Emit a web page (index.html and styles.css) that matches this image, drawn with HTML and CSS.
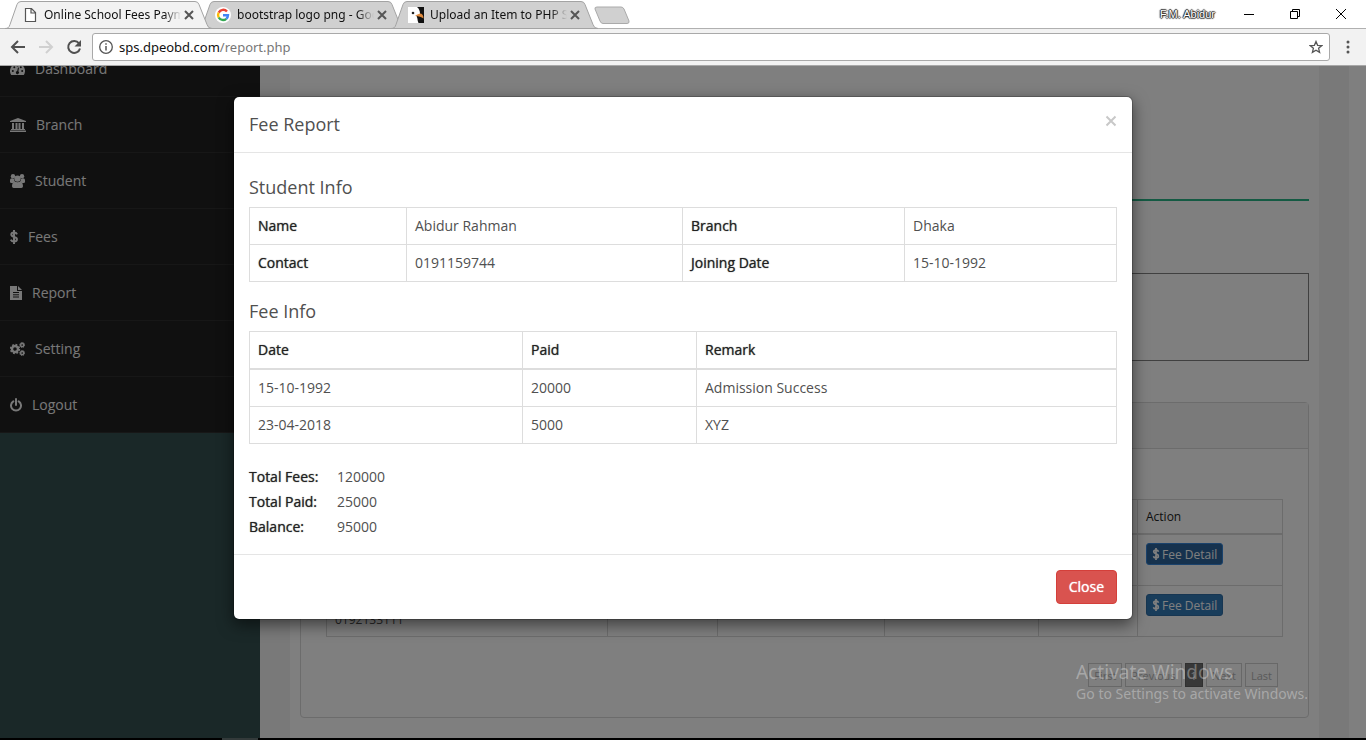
FILE: index.html
```html
<!DOCTYPE html>
<html lang="en">
<head>
<meta charset="utf-8">
<meta name="viewport" content="width=device-width, initial-scale=1">
<title>Online School Fees Payment</title>
<link rel="stylesheet" href="styles.css">
</head>
<body>
<svg class="defs" aria-hidden="true">
  <symbol id="tab-shape" viewBox="0 0 207 28">
    <path d="M0 28C3 28 4 27 5 24L12 4Q13 1 16 1H190Q193 1 194 4L202 24Q203 28 207 28Z"/>
  </symbol>
  <symbol id="cross" viewBox="0 0 16 16"><path d="M4 4l8 8M12 4l-8 8" fill="none" stroke="currentColor" stroke-width="2"/></symbol>
  <symbol id="dollar" viewBox="0 0 8 14"><path d="M4 0v14M7 4.300C6.500 3 5.500 2.500 4 2.500C2.400 2.500 1.300 3.200 1.300 4.500C1.300 7.400 6.900 6.200 6.900 9.300C6.900 10.700 5.700 11.500 4 11.500C2.400 11.500 1.300 10.900 .8 9.600" fill="none" stroke="currentColor" stroke-width="2"/></symbol>
</svg>

<header class="browser">
  <div class="tabstrip">
    <div class="tab tab-active">
      <svg class="tab-bg" preserveAspectRatio="none"><use href="#tab-shape"/></svg>
      <div class="tab-content">
        <svg class="favicon" viewBox="0 0 16 16"><path d="M3.500 1.500h6l4 4v9h-10zM9 1.500V6h4.500" fill="#fff" stroke="#555" stroke-width="1.200"/></svg>
        <span class="tab-title">Online School Fees Payment</span>
        <button class="tab-close" aria-label="Close tab"><svg viewBox="0 0 16 16"><use href="#cross"/></svg></button>
      </div>
    </div>
    <div class="tab">
      <svg class="tab-bg" preserveAspectRatio="none"><use href="#tab-shape"/></svg>
      <div class="tab-content">
        <svg class="favicon" viewBox="0 0 16 16"><circle cx="8" cy="8" r="8" fill="#fff"/><g fill="none" stroke-width="2.400"><path d="M12 4.600A5 5 0 0 0 3.700 5.600" stroke="#ea4335"/><path d="M3.700 5.600A5 5 0 0 0 3.700 10.500" stroke="#fbbc05"/><path d="M3.700 10.500A5 5 0 0 0 11.300 11.800" stroke="#34a853"/><path d="M11.300 11.800A5 5 0 0 0 13 8.200H8" stroke="#4285f4"/></g></svg>
        <span class="tab-title">bootstrap logo png - Google Search</span>
        <button class="tab-close" aria-label="Close tab"><svg viewBox="0 0 16 16"><use href="#cross"/></svg></button>
      </div>
    </div>
    <div class="tab">
      <svg class="tab-bg" preserveAspectRatio="none"><use href="#tab-shape"/></svg>
      <div class="tab-content">
        <svg class="favicon" viewBox="0 0 16 16"><path d="M0 0h16v16H0z" fill="#fff"/><path d="M9 0h7v16H10.500C9 13 10 11 8.500 9.500L12 7C12 4 11 1.500 9 0z" fill="#111"/><path d="M7 8.500L12 6.500C14 6.500 15.500 8 15.500 11.500C13.500 9.500 11 10 7 8.500z" fill="#e08a3c"/><circle cx="5" cy="6" r="1.300" fill="#222"/></svg>
        <span class="tab-title">Upload an Item to PHP Server</span>
        <button class="tab-close" aria-label="Close tab"><svg viewBox="0 0 16 16"><use href="#cross"/></svg></button>
      </div>
    </div>
    <button class="new-tab" aria-label="New tab"><svg viewBox="0 0 36 20"><path d="M3 1H27Q29 1 30 3L35 15Q35.500 17.500 33 17.500H9Q7 17.500 6 15L1 3Q.5 1 3 1z" fill="#d0d0d0" stroke="#aaa"/></svg></button>
    <span class="profile">F.M. Abidur</span>
    <button class="win-btn" aria-label="Minimize"><svg viewBox="0 0 12 12"><path d="M1 6.500h10" stroke="#000" fill="none"/></svg></button>
    <button class="win-btn" aria-label="Restore"><svg viewBox="0 0 12 12"><path d="M1.500 3.500h7v7h-7zM3.500 3.500v-2h7v7h-2" stroke="#000" fill="none"/></svg></button>
    <button class="win-btn" aria-label="Close window"><svg viewBox="0 0 12 12"><path d="M1 1l10 10M11 1L1 11" stroke="#000" fill="none"/></svg></button>
  </div>
  <div class="toolbar">
    <button class="nav-btn" aria-label="Back"><svg viewBox="0 0 16 16"><path d="M15 8H2M8 2L2 8l6 6" fill="none" stroke="#505050" stroke-width="2"/></svg></button>
    <button class="nav-btn" aria-label="Forward"><svg viewBox="0 0 16 16"><path d="M1 8h13M8 2l6 6-6 6" fill="none" stroke="#d0d0d0" stroke-width="2"/></svg></button>
    <button class="nav-btn" aria-label="Reload"><svg viewBox="0 0 16 16"><path d="M13 4.300A6 6 0 1 0 14 9.500" fill="none" stroke="#505050" stroke-width="2"/><path d="M15 1v6.500H8.500z" fill="#505050"/></svg></button>
    <div class="omnibox">
      <svg class="info" viewBox="0 0 14 14"><circle cx="7" cy="7" r="6.300" fill="none" stroke="#555" stroke-width="1.300"/><path d="M7 6v4.500M7 3.300v1.500" stroke="#555" stroke-width="1.500"/></svg>
      <div class="url" role="textbox" aria-label="Address">sps.dpeobd.com<span class="url-path">/report.php</span></div>
      <button class="star" aria-label="Bookmark this page"><svg viewBox="0 0 14 14"><path d="M7 1.500l1.600 3.800 4.200.3-3.200 2.700 1 4.100L7 10.200l-3.600 2.200 1-4.100L1.200 5.600l4.200-.3z" fill="none" stroke="#555" stroke-width="1.300"/></svg></button>
    </div>
    <button class="menu" aria-label="Menu"><svg viewBox="0 0 4 14"><g fill="#555"><circle cx="2" cy="2" r="1.500"/><circle cx="2" cy="7" r="1.500"/><circle cx="2" cy="12" r="1.500"/></g></svg></button>
  </div>
</header>

<div class="viewport">
  <div class="page">
    <nav class="sidebar">
      <ul class="menu-list">
        <li><a href="#"><svg class="i15" viewBox="0 0 15 14"><path d="M1.200 13A7.500 7.500 0 1 1 13.800 13z" fill="currentColor"/><g fill="#202020"><circle cx="2.800" cy="9" r="1"/><circle cx="4.300" cy="5.200" r="1"/><circle cx="7.500" cy="3.600" r="1"/><circle cx="12.200" cy="9" r="1"/><circle cx="10.800" cy="5.200" r="1"/><path d="M8 5.500l1 .2-.6 3.600a1.600 1.600 0 1 1-1.200-.3z"/></g></svg>Dashboard</a></li>
        <li><a href="#"><svg class="i16" viewBox="0 0 16 14"><path d="M8 0l8 3v1H0V3zM2 5h2v6h1.500V5h2v6h1V5h2v6H12V5h2v6h1v1H1v-1h1zM0 12.500h16V14H0z" fill="currentColor"/></svg>Branch</a></li>
        <li><a href="#"><svg class="i15" viewBox="0 0 15 14"><g fill="currentColor"><circle cx="3" cy="2.200" r="2.200"/><circle cx="12" cy="2.200" r="2.200"/><path d="M0 8V6.500C0 5 .8 4.200 2 4.200L4 5Q4 6.500 5 7.600L3 9H1.500Q0 9 0 8zM15 8V6.500C15 5 14.200 4.200 13 4.200L11 5Q11 6.500 10 7.600L12 9h1.500Q15 9 15 8z"/><circle cx="7.500" cy="4.600" r="3.200"/><path d="M2 12.300C2 10 2.700 8 4.500 7.500Q7.500 9 10.500 7.500C12.300 8 13 10 13 12.300Q13 14 11.300 14H3.700Q2 14 2 12.300z"/></g></svg>Student</a></li>
        <li><a href="#"><svg class="i8" viewBox="0 0 8 14"><use href="#dollar"/></svg>Fees</a></li>
        <li><a href="#"><svg class="i12" viewBox="0 0 12 14"><path d="M0 0h7v5h5v9H0zM8 0l4 4H8z" fill="currentColor"/><path d="M3 6.500h6M3 8.800h6M3 11h6" stroke="#202020"/></svg>Report</a></li>
        <li><a href="#"><svg class="i15" viewBox="0 0 15 14"><g fill="none" stroke="currentColor"><circle cx="5" cy="7" r="3" stroke-width="2.400"/><circle cx="5" cy="7" r="4.400" stroke-width="1.600" stroke-dasharray="1.800 1.650"/><circle cx="12.200" cy="3" r="1.600" stroke-width="1.500"/><circle cx="12.200" cy="3" r="2.500" stroke-width="1" stroke-dasharray="1.200 .76"/><circle cx="12.200" cy="11" r="1.600" stroke-width="1.500"/><circle cx="12.200" cy="11" r="2.500" stroke-width="1" stroke-dasharray="1.200 .76"/></g></svg>Setting</a></li>
        <li><a href="#"><svg class="i12" viewBox="0 0 12 14"><path d="M3.300 3.400A5 5 0 1 0 8.700 3.400M6 1v6" fill="none" stroke="currentColor" stroke-width="2" stroke-linecap="round"/></svg>Logout</a></li>
      </ul>
    </nav>
    <main class="content">
      <div class="inner">
        <hr class="rule">
        <div class="search-box"></div>
        <section class="panel">
          <div class="panel-head"></div>
          <div class="panel-body">
            <table class="grid report-table">
              <colgroup><col class="w281"><col class="w110"><col class="w167"><col class="w154"><col class="w99"><col></colgroup>
              <thead><tr><th></th><th></th><th></th><th></th><th></th><th>Action</th></tr></thead>
              <tbody>
                <tr><td>Abidur Rahman<br>0191159744</td><td></td><td></td><td></td><td></td><td><button class="detail detail-focus"><svg class="i8" viewBox="0 0 8 14"><use href="#dollar"/></svg>Fee Detail</button></td></tr>
                <tr><td><br>0192133111</td><td></td><td></td><td></td><td></td><td><button class="detail"><svg class="i8" viewBox="0 0 8 14"><use href="#dollar"/></svg>Fee Detail</button></td></tr>
              </tbody>
            </table>
            <div class="pager">
              <button>First</button><button>Previous</button><button class="current">1</button><button>Next</button><button>Last</button>
            </div>
          </div>
        </section>
      </div>
    </main>
  </div>

  <div class="backdrop">
    <div class="modal" role="dialog" aria-labelledby="modal-title">
      <div class="modal-header">
        <h4 id="modal-title">Fee Report</h4>
        <button class="dismiss" aria-label="Dismiss"><svg viewBox="0 0 12 12"><path d="M1.500 1.500l9 9M10.500 1.500l-9 9" fill="none" stroke="#c8c8c8" stroke-width="2"/></svg></button>
      </div>
      <div class="modal-body">
        <h4>Student Info</h4>
        <table class="grid">
          <colgroup><col class="w157"><col class="w276"><col class="w222"><col></colgroup>
          <tbody>
            <tr><th>Name</th><td>Abidur Rahman</td><th>Branch</th><td>Dhaka</td></tr>
            <tr><th>Contact</th><td>0191159744</td><th>Joining Date</th><td>15-10-1992</td></tr>
          </tbody>
        </table>
        <h4>Fee Info</h4>
        <table class="grid">
          <colgroup><col class="w273"><col class="w174"><col></colgroup>
          <thead><tr><th>Date</th><th>Paid</th><th>Remark</th></tr></thead>
          <tbody>
            <tr><td>15-10-1992</td><td>20000</td><td>Admission Success</td></tr>
            <tr><td>23-04-2018</td><td>5000</td><td>XYZ</td></tr>
          </tbody>
        </table>
        <table class="totals">
          <tbody>
            <tr><th>Total Fees:</th><td>120000</td></tr>
            <tr><th>Total Paid:</th><td>25000</td></tr>
            <tr><th>Balance:</th><td>95000</td></tr>
          </tbody>
        </table>
      </div>
      <div class="modal-footer"><button class="close-btn">Close</button></div>
    </div>
  </div>

  <div class="watermark"><p class="wm-title">Activate Windows</p><p class="wm-text">Go to Settings to activate Windows.</p></div>
</div>
<footer class="taskbar"><span class="task"></span></footer>
</body>
</html>
```
FILE: styles.css
```css
* { box-sizing: border-box; }
body {
  margin: 0;
  height: 100vh;
  display: flex;
  flex-direction: column;
  overflow: hidden;
  background: #fff;
  color: #505050;
  font: 14px/20px "Open Sans", "Noto Sans", sans-serif;
}
button { margin: 0; padding: 0; border: 0; background: none; font: inherit; color: inherit; }
svg { display: block; flex: none; }
.defs { position: absolute; width: 0; height: 0; }

/* Browser frame */
.browser { font-family: "Noto Sans", "Open Sans", sans-serif; color: #111; }
.tabstrip { display: flex; height: 28px; padding: 0 2px 0 5px; font-size: 12px; }
.tab { display: grid; grid-template-columns: minmax(0, 1fr); width: 207px; height: 29px; margin-right: -14px; }
.tab > * { grid-area: 1 / 1; }
.tab-active { position: relative; z-index: 1; }
.tab-bg { width: 100%; height: 29px; fill: #d0d0d0; stroke: #a3a3a3; }
.tab-active .tab-bg { fill: #f2f2f2; }
.tab-content { display: flex; align-items: center; height: 29px; padding: 0 15px 0 17px; }
.favicon { width: 16px; height: 16px; margin-right: 6px; }
.tab-title {
  flex: 1;
  min-width: 0;
  overflow: hidden;
  white-space: nowrap;
  -webkit-mask-image: linear-gradient(to right, #000 88%, transparent);
  mask-image: linear-gradient(to right, #000 88%, transparent);
}
.tab-close { color: #555; }
.tab-close svg { width: 16px; height: 16px; }
.new-tab { align-self: flex-start; margin: 6px auto 0 10px; }
.new-tab svg { width: 36px; height: 20px; }
.profile {
  margin-right: 11px;
  font: 11px/28px "Liberation Sans", Arial, sans-serif;
  color: #fff;
  text-shadow: 1px 0 1px #222, -1px 0 1px #222, 0 1px 1px #222, 0 -1px 1px #222;
}
.win-btn { width: 46px; height: 27px; display: grid; place-items: center; }
.win-btn svg { width: 12px; height: 12px; }
.toolbar {
  display: flex;
  align-items: center;
  height: 38px;
  padding: 0 8px 0 4px;
  background: #f2f2f2;
  border-top: 1px solid #b0b0b0;
  border-bottom: 1px solid #a8a8a8;
}
.nav-btn { width: 28px; height: 28px; display: grid; place-items: center; }
.nav-btn svg { width: 16px; height: 16px; }
.omnibox {
  flex: 1;
  display: flex;
  align-items: center;
  gap: 6px;
  height: 28px;
  margin: 0 8px 0 4px;
  padding: 0 6px;
  background: #fff;
  border: 1px solid #a9a9a9;
  border-radius: 3px;
}
.info, .star svg { width: 14px; height: 14px; }
.url { flex: 1; font-size: 13px; }
.url-path { color: #777; }
.menu { width: 20px; height: 28px; display: grid; place-items: center; }
.menu svg { width: 4px; height: 14px; }

/* Scrolled page under the dialog */
.viewport { position: relative; flex: 1; min-height: 0; overflow: hidden; }
.page { display: flex; height: 100%; padding-right: 17px; overflow: hidden; }
.sidebar { flex: none; width: 260px; background: #345050; }
.menu-list { margin: -25px 0 0; padding: 0; list-style: none; background: #202020; }
.menu-list a {
  display: flex;
  align-items: center;
  gap: 10px;
  height: 56px;
  padding: 0 10px;
  border-bottom: 1px solid #2f2f2f;
  color: #f0f0f0;
  text-decoration: none;
}
.menu-list svg { height: 14px; }
.i8 { width: 8px; }
.i12 { width: 12px; }
.i15 { width: 15px; }
.i16 { width: 16px; }
.content { flex: 1; min-width: 0; padding: 0 30px; background: #f3f3f3; }
.inner { height: 100%; padding: 133px 10px 0; background: #fff; }
.rule { margin: 0; border: 0; border-top: 2px solid #28b486; }
.search-box { height: 88px; margin: 72px 0 41px; border: 1px solid #808080; }
.panel { border: 1px solid #d8d8d8; border-radius: 4px; }
.panel-head { height: 46px; background: #f5f5f5; border-bottom: 1px solid #d8d8d8; }
.panel-body { padding: 50px 25px 30px; font-size: 12px; line-height: 17px; }
.pager { display: flex; justify-content: flex-end; gap: 3px; margin-top: 26px; padding-right: 5px; }
.pager button {
  height: 24px;
  padding: 0 5px;
  border: 1px solid #d0d0d0;
  color: #b4b4b4;
  font-size: 11px;
}
.pager .current { background: #707070; border-color: #606060; color: #eee; }
.detail {
  display: flex;
  align-items: center;
  gap: 2px;
  height: 22px;
  padding: 0 5px;
  background: #337ab7;
  border: 1px solid #2e6da4;
  border-radius: 3px;
  color: #fff;
  white-space: nowrap;
}
.detail svg { height: 12px; }
.detail-focus { background: #2c659c; border-color: #3484d8; }

/* Tables */
.grid { width: 100%; table-layout: fixed; border-collapse: collapse; }
.grid th, .grid td { padding: 8px; border: 1px solid #ddd; text-align: left; vertical-align: top; font-weight: 400; }
.grid th, .totals th { color: #222; font-weight: 500; text-shadow: 0 0 1px #555; }
.grid thead th { border-bottom-width: 2px; }
.report-table th, .report-table td { border-color: #d8d8d8; }
.report-table th { text-shadow: none; }
.w99 { width: 99px; }
.w110 { width: 110px; }
.w154 { width: 154px; }
.w157 { width: 157px; }
.w167 { width: 167px; }
.w174 { width: 174px; }
.w222 { width: 222px; }
.w273 { width: 273px; }
.w276 { width: 276px; }
.w281 { width: 281px; }
.totals { margin-top: 20px; border-collapse: collapse; line-height: 25px; }
.totals th { width: 88px; padding: 0; text-align: left; }
.totals td { padding: 0; }

/* Dialog */
.backdrop { position: absolute; inset: 0; padding: 30px 16px; background: rgba(0, 0, 0, .5); }
.modal {
  max-width: 900px;
  margin: 0 auto;
  background: #fff;
  background-clip: padding-box;
  border: 1px solid rgba(0, 0, 0, .2);
  border-radius: 6px;
  box-shadow: 0 5px 15px rgba(0, 0, 0, .5);
}
.modal h4 { margin: 0; font-size: 18px; line-height: 19px; font-weight: 400; }
.modal-header { display: flex; justify-content: space-between; padding: 15px; border-bottom: 1px solid #e5e5e5; }
.modal-header h4 { line-height: 25px; }
.dismiss { height: 18px; }
.dismiss svg { width: 12px; height: 12px; }
.modal-body { padding: 15px; }
.modal-body h4 { margin: 10px 0; }
.modal-body .grid + h4 { margin-top: 20px; }
.modal-footer { padding: 15px; border-top: 1px solid #e5e5e5; text-align: right; }
.close-btn {
  height: 34px;
  padding: 0 12px;
  background: #d9534f;
  border: 1px solid #d43f3a;
  border-radius: 4px;
  color: #fff;
  font-weight: 500;
  text-shadow: 0 0 1px #fff;
  vertical-align: top;
}

.watermark { position: absolute; right: 58px; bottom: 34px; color: rgba(255, 255, 255, .32); font-family: "Noto Sans", sans-serif; }
.watermark p { margin: 0; }
.wm-title { font-size: 19px; line-height: 24px; }
.wm-text { font-size: 14px; line-height: 20px; }
.taskbar { flex: none; display: flex; height: 2px; padding-left: 222px; background: #000; }
.task { width: 36px; background: #333a3a; }
```
